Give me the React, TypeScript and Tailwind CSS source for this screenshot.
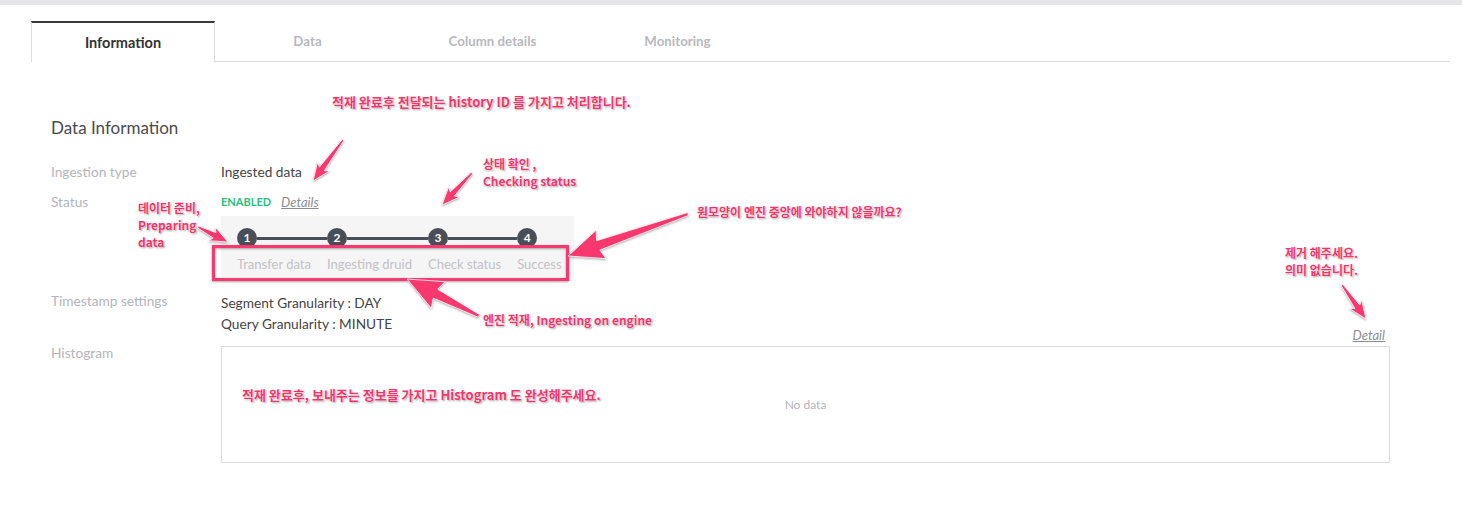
import React from "react";

const PINK = "#f8386e";

type Pt = [number, number];

// tapered "skitch" style arrow, tail -> tip
const arrowPoints = (
  tail: Pt,
  tip: Pt,
  headLen: number,
  headW: number,
  bodyW: number,
  tailW: number
) => {
  const dx = tip[0] - tail[0];
  const dy = tip[1] - tail[1];
  const len = Math.hypot(dx, dy);
  const ux = dx / len;
  const uy = dy / len;
  const nx = -uy;
  const ny = ux;
  const bx = tip[0] - ux * headLen;
  const by = tip[1] - uy * headLen;
  const pts: Pt[] = [
    [tail[0] + (nx * tailW) / 2, tail[1] + (ny * tailW) / 2],
    [bx + (nx * bodyW) / 2, by + (ny * bodyW) / 2],
    [bx - ux * 3 + (nx * headW) / 2, by - uy * 3 + (ny * headW) / 2],
    tip,
    [bx - ux * 3 - (nx * headW) / 2, by - uy * 3 - (ny * headW) / 2],
    [bx - (nx * bodyW) / 2, by - (ny * bodyW) / 2],
    [tail[0] - (nx * tailW) / 2, tail[1] - (ny * tailW) / 2],
  ];
  return pts.map((p) => `${p[0].toFixed(1)},${p[1].toFixed(1)}`).join(" ");
};

const arrows = [
  { tail: [343, 140] as Pt, tip: [313, 181] as Pt, big: false },
  { tail: [472, 173] as Pt, tip: [442, 205] as Pt, big: false },
  { tail: [198, 227] as Pt, tip: [228, 242] as Pt, big: false },
  { tail: [1342, 285] as Pt, tip: [1366, 319] as Pt, big: false },
  { tail: [688, 214] as Pt, tip: [568, 256] as Pt, big: true },
  { tail: [479, 316] as Pt, tip: [407, 279] as Pt, big: true },
];

const notes = [
  { left: 332, top: 93, big: true, lines: ["적재 완료후 전달되는 history ID 를 가지고 처리합니다."] },
  { left: 483, top: 155, big: false, lines: ["상태 확인 ,", "Checking status"] },
  { left: 138, top: 199, big: false, lines: ["데이터 준비,", "Preparing", "data"] },
  { left: 697, top: 203, big: false, lines: ["원모양이 엔진 중앙에 와야하지 않을까요?"] },
  { left: 483, top: 311, big: false, lines: ["엔진 적재, Ingesting on engine"] },
  { left: 1285, top: 244, big: false, lines: ["제거 해주세요.", "의미 없습니다."] },
  { left: 242, top: 386, big: true, lines: ["적재 완료후, 보내주는 정보를 가지고 Histogram 도 완성해주세요."] },
];

const tabs = ["Information", "Data", "Column details", "Monitoring"];
const steps = ["Transfer data", "Ingesting druid", "Check status", "Success"];

const Label = ({ children }: { children: React.ReactNode }) => (
  <div className="w-[170px] shrink-0 text-[13.7px] leading-[18px] text-[#b4b4bb]">{children}</div>
);

export default function App() {
  return (
    <div className="relative h-[507px] w-[1462px] overflow-hidden bg-white font-['Lato',sans-serif] text-[#444]">
      <div className="h-[5px] bg-[#e6e6e8]" />

      {/* tabs */}
      <div className="pl-[31px] pr-[12px] pt-[16px]">
        <div className="flex h-[41px] border-b border-[#dcdcdc]">
          {tabs.map((t, i) =>
            i === 0 ? (
              <div
                key={t}
                className="-mb-px flex w-[184px] items-center justify-center border-x border-t-2 border-x-[#dcdcdc] border-t-[#3a3a3a] bg-white text-[14.5px] font-bold text-[#333]"
              >
                {t}
              </div>
            ) : (
              <div
                key={t}
                className="flex w-[185px] items-center justify-center border-t-2 border-transparent text-[13.3px] font-bold text-[#b8b8be]"
              >
                {t}
              </div>
            )
          )}
        </div>
      </div>

      {/* content */}
      <div className="pl-[51px]">
        <div className="mt-[54px] text-[17px] leading-[24px] text-[#4a4a4f]">Data Information</div>

        <div className="mt-[23px] flex">
          <Label>Ingestion type</Label>
          <div className="text-[13.7px] leading-[18px] text-[#444]">Ingested data</div>
        </div>

        <div className="mt-[12px] flex">
          <Label>Status</Label>
          <div>
            <div className="flex items-center gap-[10px] leading-[18px]">
              <span className="text-[11px] font-bold text-[#2bbf7b]">ENABLED</span>
              <span className="text-[13px] italic text-[#8c8c92] underline">Details</span>
            </div>
            <div className="mt-[5px] h-[65px] w-[353px] bg-[#f5f5f6] pl-[16px] pt-[12px]">
              <div className="flex">
                {steps.map((s, i) => (
                  <div key={s} className={i < steps.length - 1 ? "flex flex-col pr-[16px]" : "flex flex-col"}>
                    <div className="flex items-center">
                      <div className="flex h-[20px] w-[20px] shrink-0 items-center justify-center rounded-full bg-[#4a4e56] text-[12px] font-bold text-white">
                        {i + 1}
                      </div>
                      {i < steps.length - 1 && <div className="-mr-[16px] h-[3px] flex-1 bg-[#4a4e56]" />}
                    </div>
                    <div className="mt-[7px] whitespace-nowrap text-[13px] leading-[18px] text-[#c2c2c7]">{s}</div>
                  </div>
                ))}
              </div>
            </div>
          </div>
        </div>

        <div className="mt-[11px] flex">
          <Label>Timestamp settings</Label>
          <div className="text-[13.7px] leading-[21px] text-[#444]">
            <div>Segment Granularity : DAY</div>
            <div>Query Granularity : MINUTE</div>
          </div>
        </div>

        <div className="mt-[-7px] flex">
          <div className="mt-[17px]">
            <Label>Histogram</Label>
          </div>
          <div className="w-[1169px]">
            <div className="pr-[5px] text-right text-[13px] italic leading-[16px] text-[#8c8c92] underline">Detail</div>
            <div className="mt-[3px] flex h-[117px] items-center justify-center border border-[#dcdcdc]">
              <span className="text-[12px] text-[#b4b4bb]">No data</span>
            </div>
          </div>
        </div>
      </div>

      {/* review annotations */}
      <svg
        className="pointer-events-none absolute left-0 top-0 drop-shadow-[0_1px_1px_rgba(0,0,0,0.35)]"
        width={1462}
        height={507}
        viewBox="0 0 1462 507"
      >
        <rect x={213.5} y={246.5} width={354} height={33} fill="none" stroke={PINK} strokeWidth={3} />
        {arrows.map((a, i) => (
          <polygon
            key={i}
            points={
              a.big
                ? arrowPoints(a.tail, a.tip, 32, 30, 10, 3)
                : arrowPoints(a.tail, a.tip, 15, 15, 6, 2)
            }
            fill={PINK}
            stroke="#fff"
            strokeWidth={0.8}
            strokeLinejoin="round"
          />
        ))}
      </svg>
      {notes.map((n, i) => (
        <div
          key={i}
          className={
            (n.big ? "text-[13px] leading-[18px] " : "text-[12px] leading-[17px] ") +
            "pointer-events-none absolute whitespace-nowrap font-['Noto_Sans_CJK_KR',sans-serif] font-bold text-[#f5336b] [text-shadow:0_0_1px_#fff,0_0_2px_#fff,1px_1px_2px_rgba(0,0,0,0.45)]"
          }
          style={{ left: n.left, top: n.top }}
        >
          {n.lines.map((l) => (
            <div key={l}>{l}</div>
          ))}
        </div>
      ))}
    </div>
  );
}
